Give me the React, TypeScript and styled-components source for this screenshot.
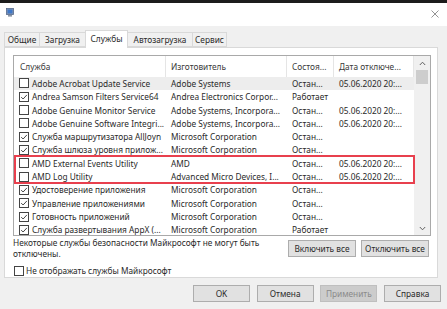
import React from 'react'
import styled, { createGlobalStyle } from 'styled-components'

const GlobalStyle = createGlobalStyle`
    html, body {
        margin: 0;
        padding: 0;
    }
    body {
        background: #f0f0f0;
        font-family: 'Segoe UI', 'Noto Sans', sans-serif;
        font-size: 8.3px;
        color: #2a2a2a;
        overflow: hidden;
    }
`

type Service = {
    name: string
    maker: string
    status: string
    date?: string
    on: boolean
}

const services: Service[] = [
    { name: 'Adobe Acrobat Update Service', maker: 'Adobe Systems', status: 'Остан...', date: '05.06.2020 20:...', on: false },
    { name: 'Andrea Samson Filters Service64', maker: 'Andrea Electronics Corpor...', status: 'Работает', on: true },
    { name: 'Adobe Genuine Monitor Service', maker: 'Adobe Systems, Incorpora...', status: 'Остан...', date: '05.06.2020 20:...', on: false },
    { name: 'Adobe Genuine Software Integri...', maker: 'Adobe Systems, Incorpora...', status: 'Остан...', date: '05.06.2020 20:...', on: false },
    { name: 'Служба маршрутизатора AllJoyn', maker: 'Microsoft Corporation', status: 'Остан...', on: true },
    { name: 'Служба шлюза уровня прилож...', maker: 'Microsoft Corporation', status: 'Остан...', on: true },
    { name: 'AMD External Events Utility', maker: 'AMD', status: 'Остан...', date: '05.06.2020 20:...', on: false },
    { name: 'AMD Log Utility', maker: 'Advanced Micro Devices, I...', status: 'Остан...', date: '05.06.2020 20:...', on: false },
    { name: 'Удостоверение приложения', maker: 'Microsoft Corporation', status: 'Остан...', on: true },
    { name: 'Управление приложениями', maker: 'Microsoft Corporation', status: 'Остан...', on: true },
    { name: 'Готовность приложений', maker: 'Microsoft Corporation', status: 'Остан...', on: true },
    { name: 'Служба развертывания AppX (...', maker: 'Microsoft Corporation', status: 'Работает', on: true },
]

const tabs = [
    { label: 'Общие', width: 36 },
    { label: 'Загрузка', width: 47 },
    { label: 'Службы', width: 43, active: true },
    { label: 'Автозагрузка', width: 66 },
    { label: 'Сервис', width: 35 },
]

const columns = ['Служба', 'Изготовитель', 'Состоя...', 'Дата отключе...']

const CheckBox = ({ on }: { on: boolean }) => (
    <Box>
        {on && (
            <svg width="8" height="8" viewBox="0 0 8 8">
                <path d="M1.2 4.1 L3.1 6 L6.9 1.9" fill="none" stroke="#333" strokeWidth="0.9" />
            </svg>
        )}
    </Box>
)

const Chevron = ({ up }: { up?: boolean }) => (
    <svg width="7" height="5" viewBox="0 0 7 5">
        <path
            d={up ? 'M0.8 4 L3.5 1.2 L6.2 4' : 'M0.8 1 L3.5 3.8 L6.2 1'}
            fill="none"
            stroke="#606060"
            strokeWidth="1"
        />
    </svg>
)

export default function App() {
    return (
        <Window>
            <GlobalStyle />
            <TopEdge />
            <TitleBar>
                <svg width="8" height="9" viewBox="0 0 8 9">
                    <rect x="0.5" y="0.5" width="7" height="6" fill="#7f93b3" stroke="#56698a" strokeWidth="0.8" />
                    <rect x="1.6" y="1.6" width="4.8" height="3.8" fill="#3f78c9" />
                    <rect x="2" y="7" width="4" height="1.6" fill="#8a95a5" />
                </svg>
                <svg width="8" height="8" viewBox="0 0 8 8" style={{ marginTop: 2 }}>
                    <path d="M0.5 0.5 L7.5 7.5 M7.5 0.5 L0.5 7.5" stroke="#777" strokeWidth="0.8" />
                </svg>
            </TitleBar>

            <TabStrip>
                {tabs.map(t => (
                    <Tab key={t.label} $active={!!t.active} style={{ width: t.width }}>
                        {t.label}
                    </Tab>
                ))}
            </TabStrip>

            <Panel>
                <ListBox>
                    <ListBody>
                        <HeaderRow>
                            {columns.map((c, i) => (
                                <HeaderCell key={c} $first={i === 0}>
                                    {c}
                                </HeaderCell>
                            ))}
                        </HeaderRow>
                        {services.map((s, i) => (
                            <Row key={s.name} $shade={i === 0}>
                                <NameCell>
                                    <CheckBox on={s.on} />
                                    <span>{s.name}</span>
                                </NameCell>
                                <Cell>{s.maker}</Cell>
                                <Cell>{s.status}</Cell>
                                <Cell>{s.date || ''}</Cell>
                            </Row>
                        ))}
                    </ListBody>
                    <ScrollBar>
                        <ScrollButton>
                            <Chevron up />
                        </ScrollButton>
                        <Thumb />
                        <ScrollButton>
                            <Chevron />
                        </ScrollButton>
                    </ScrollBar>
                    <Highlight />
                </ListBox>

                <InfoRow>
                    <Note>Некоторые службы безопасности Майкрософт не могут быть отключены.</Note>
                    <ButtonGroup>
                        <Button $w={68}>Включить все</Button>
                        <Button $w={68}>Отключить все</Button>
                    </ButtonGroup>
                </InfoRow>

                <HideRow>
                    <CheckBox on={false} />
                    <span>Не отображать службы Майкрософт</span>
                </HideRow>
            </Panel>

            <Footer>
                <Button $w={57}>OK</Button>
                <Button $w={57}>Отмена</Button>
                <Button $w={57} $disabled>
                    Применить
                </Button>
                <Button $w={57}>Справка</Button>
            </Footer>
        </Window>
    )
}

const Window = styled.div`
    width: 447px;
    height: 309px;
    display: flex;
    flex-direction: column;
    overflow: hidden;
`

const TopEdge = styled.div`
    height: 3px;
    background: #1c1c1c;
`

const TitleBar = styled.div`
    height: 23px;
    background: #fff;
    display: flex;
    align-items: flex-start;
    justify-content: space-between;
    padding: 5px 8px 0 6px;
    box-sizing: border-box;
`

const TabStrip = styled.div`
    height: 21px;
    display: flex;
    align-items: flex-end;
    padding-left: 5px;
    position: relative;
    z-index: 1;
`

const Tab = styled.div<{ $active: boolean }>`
    box-sizing: border-box;
    height: ${p => (p.$active ? '18px' : '15px')};
    margin-bottom: ${p => (p.$active ? '-1px' : '0')};
    background: ${p => (p.$active ? '#fff' : '#f0f0f0')};
    border: 1px solid #d9d9d9;
    border-bottom: ${p => (p.$active ? 'none' : '1px solid #d9d9d9')};
    margin-left: -1px;
    display: flex;
    align-items: center;
    justify-content: center;
    padding-bottom: ${p => (p.$active ? '2px' : '0')};
    white-space: nowrap;
`

const Panel = styled.div`
    width: 434px;
    height: 231px;
    margin-left: 4px;
    box-sizing: border-box;
    background: #fff;
    border: 1px solid #d9d9d9;
    padding: 7px 0 0 8px;
`

const ListBox = styled.div`
    position: relative;
    width: 418px;
    height: 181px;
    box-sizing: border-box;
    border: 1px solid #a9a9a9;
    background: #fff;
    display: flex;
    overflow: hidden;
`

const ListBody = styled.div`
    width: 400px;
    display: flex;
    flex-direction: column;
    overflow: hidden;
`

const grid = `
    display: grid;
    grid-template-columns: 152px 121px 47px 80px;
`

const HeaderRow = styled.div`
    ${grid};
    flex: none;
    height: 20.7px;
    color: #3a3a3a;
`

const HeaderCell = styled.div<{ $first: boolean }>`
    display: flex;
    align-items: center;
    padding-left: ${p => (p.$first ? '6px' : '5px')};
    border-right: 1px solid #e5e5e5;
    white-space: nowrap;
    overflow: hidden;
`

const Row = styled.div<{ $shade: boolean }>`
    ${grid};
    flex: none;
    height: 13.33px;
    background: ${p => (p.$shade ? '#ededed' : 'transparent')};
`

const Cell = styled.div`
    display: flex;
    align-items: center;
    padding-left: 5px;
    white-space: nowrap;
    overflow: hidden;
`

const NameCell = styled(Cell)`
    gap: 3px;
`

const Box = styled.span`
    width: 10px;
    height: 10px;
    flex: none;
    box-sizing: border-box;
    border: 1px solid #444;
    background: #fff;
    display: inline-flex;
    align-items: center;
    justify-content: center;
`

const ScrollBar = styled.div`
    width: 16px;
    background: #f0f0f0;
    display: flex;
    flex-direction: column;
    align-items: center;
`

const ScrollButton = styled.div`
    height: 14px;
    display: flex;
    align-items: center;
    justify-content: center;
    &:last-child {
        margin-top: auto;
    }
`

const Thumb = styled.div`
    width: 12px;
    height: 14px;
    background: #cdcdcd;
`

const Highlight = styled.div`
    position: absolute;
    left: 0;
    top: 98.5px;
    width: 401px;
    height: 29.5px;
    box-sizing: border-box;
    border: 2px solid #e8404e;
    pointer-events: none;
`

const InfoRow = styled.div`
    width: 416px;
    display: flex;
    justify-content: space-between;
    align-items: flex-start;
    margin-top: 4px;
`

const Note = styled.div`
    width: 265px;
    line-height: 10.5px;
    margin-top: -2px;
`

const ButtonGroup = styled.div`
    display: flex;
    gap: 5px;
`

const Button = styled.div<{ $w: number; $disabled?: boolean }>`
    width: ${p => p.$w}px;
    height: 17px;
    box-sizing: border-box;
    display: flex;
    align-items: center;
    justify-content: center;
    background: ${p => (p.$disabled ? '#cccccc' : '#e1e1e1')};
    border: 1px solid ${p => (p.$disabled ? '#bfbfbf' : '#adadad')};
    color: ${p => (p.$disabled ? '#8a8a8a' : '#2a2a2a')};
    white-space: nowrap;
`

const HideRow = styled.div`
    display: flex;
    align-items: center;
    gap: 2px;
    margin: 6px 0 0 1px;
`

const Footer = styled.div`
    display: flex;
    justify-content: flex-end;
    gap: 6.7px;
    padding: 7px 6px 0 0;
`
